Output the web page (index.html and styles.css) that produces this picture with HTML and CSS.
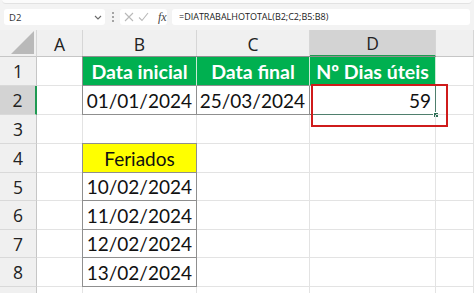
FILE: index.html
```html
<!DOCTYPE html>
<html lang="pt">
<head>
<meta charset="utf-8">
<title>Planilha</title>
<link rel="stylesheet" href="styles.css">
</head>
<body>
<div class="app">
  <div class="topbar">
    <div class="ribbon-edge"></div>
    <div class="fbar">
      <div class="namebox">
        <span class="nb-text">D2</span>
        <svg class="chev" width="8" height="5" viewBox="0 0 8 5"><path d="M1 1 L4 4 L7 1" fill="none" stroke="#6a6a6a" stroke-width="1.1"/></svg>
      </div>
      <div class="dots"><i></i><i></i><i></i></div>
      <div class="fxbox">
        <svg class="ico" width="10" height="10" viewBox="0 0 10 10"><path d="M1 1 L9 9 M9 1 L1 9" fill="none" stroke="#b9b9b9" stroke-width="1.1"/></svg>
        <svg class="ico" width="11" height="10" viewBox="0 0 11 10"><path d="M1 5.5 L4 8.5 L10 1" fill="none" stroke="#b9b9b9" stroke-width="1.1"/></svg>
        <span class="fx">fx</span>
      </div>
      <div class="formula">=DIATRABALHOTOTAL(B2;C2;B5:B8)</div>
    </div>
  </div>

  <div class="sheet">
    <!-- header row -->
    <div class="c h corner"><svg width="24" height="23" viewBox="0 0 24 23"><path d="M23 0 L23 23 L0 23 Z" fill="#b9b9b9"/></svg></div>
    <div class="c h">A</div>
    <div class="c h">B</div>
    <div class="c h">C</div>
    <div class="c h hsel">D</div>
    <div class="c h"></div>

    <!-- row 1 -->
    <div class="c rh">1</div>
    <div class="c"></div>
    <div class="c g bt bl">Data inicial</div>
    <div class="c g bt">Data final</div>
    <div class="c g bt">Nº Dias úteis</div>
    <div class="c"></div>

    <!-- row 2 -->
    <div class="c rh rsel">2</div>
    <div class="c"></div>
    <div class="c b r bl">01/01/2024</div>
    <div class="c b r">25/03/2024</div>
    <div class="c b r active">59<span class="handle"></span></div>
    <div class="c"></div>

    <!-- row 3 -->
    <div class="c rh">3</div>
    <div class="c"></div>
    <div class="c"></div>
    <div class="c"></div>
    <div class="c"></div>
    <div class="c"></div>

    <!-- row 4 -->
    <div class="c rh">4</div>
    <div class="c"></div>
    <div class="c b yl bt bl">Feriados</div>
    <div class="c"></div>
    <div class="c"></div>
    <div class="c"></div>

    <!-- row 5 -->
    <div class="c rh">5</div>
    <div class="c"></div>
    <div class="c b r bl">10/02/2024</div>
    <div class="c"></div>
    <div class="c"></div>
    <div class="c"></div>

    <!-- row 6 -->
    <div class="c rh">6</div>
    <div class="c"></div>
    <div class="c b r bl">11/02/2024</div>
    <div class="c"></div>
    <div class="c"></div>
    <div class="c"></div>

    <!-- row 7 -->
    <div class="c rh">7</div>
    <div class="c"></div>
    <div class="c b r bl">12/02/2024</div>
    <div class="c"></div>
    <div class="c"></div>
    <div class="c"></div>

    <!-- row 8 -->
    <div class="c rh">8</div>
    <div class="c"></div>
    <div class="c b r bl">13/02/2024</div>
    <div class="c"></div>
    <div class="c"></div>
    <div class="c"></div>

    <!-- row 9 (partly visible) -->
    <div class="c rh"></div>
    <div class="c"></div>
    <div class="c"></div>
    <div class="c"></div>
    <div class="c"></div>
    <div class="c"></div>

    <div class="redbox"></div>
  </div>
</div>
</body>
</html>
```

FILE: styles.css
```css
* { box-sizing: border-box; }

html, body {
  margin: 0;
  padding: 0;
  background: #ffffff;
  overflow: hidden;
}

.app {
  width: 474px;
  height: 293px;
  overflow: hidden;
}

/* ---------- formula bar ---------- */
.topbar {
  height: 30px;
  background: #f3f3f3;
  position: relative;
}

.ribbon-edge {
  height: 4px;
  margin: 0 2px;
  background: #fbfbfb;
  border-bottom: 1px solid #e2e2e2;
  border-radius: 0 0 4px 4px;
}

.fbar {
  display: flex;
  align-items: center;
  height: 16px;
  margin-top: 5px;
  padding-left: 4px;
}

.namebox {
  width: 101px;
  height: 16px;
  background: #ffffff;
  border-radius: 3px;
  display: flex;
  align-items: center;
  justify-content: space-between;
  padding: 0 3px 0 5px;
  font-family: "Open Sans", "Noto Sans", sans-serif;
  font-size: 9.5px;
  color: #333;
}

.chev { display: block; }

.dots {
  width: 15px;
  height: 16px;
  display: flex;
  flex-direction: column;
  align-items: center;
  justify-content: center;
  gap: 2px;
}

.dots i {
  display: block;
  width: 2px;
  height: 2px;
  border-radius: 50%;
  background: #8a8a8a;
}

.fxbox {
  width: 47px;
  height: 16px;
  background: #ffffff;
  border-radius: 3px;
  display: flex;
  align-items: center;
  gap: 4px;
  padding-left: 4px;
}

.ico { display: block; }

.fx {
  font-family: "Liberation Serif", serif;
  font-style: italic;
  font-size: 12px;
  color: #444;
  margin-left: 5px;
  line-height: 1;
}

.formula {
  margin-left: 5px;
  width: 298px;
  height: 16px;
  background: #ffffff;
  border-radius: 3px;
  padding-left: 7px;
  font-family: "Open Sans", "Noto Sans", sans-serif;
  font-size: 9px;
  line-height: 16px;
  color: #222;
  white-space: nowrap;
}

/* ---------- sheet ---------- */
.sheet {
  position: relative;
  display: grid;
  grid-template-columns: 37px 46px 114px 113px 126px 38px;
  grid-template-rows: 27px 29px 29px 29px 29px 28px 29px 28px 29px 29px;
}

.c {
  border-right: 1px solid #e3e3e3;
  border-bottom: 1px solid #e3e3e3;
  display: flex;
  align-items: flex-end;
  padding: 0 4px 4px;
  font-family: Lato, "Noto Sans", sans-serif;
  font-size: 19px;
  line-height: 1;
  color: #111;
  white-space: nowrap;
  position: relative;
}

/* headers */
.h {
  background: #f0f0f0;
  border-right: 1px solid #d6d6d6;
  border-bottom: 1px solid #c6c6c6;
  justify-content: center;
  align-items: center;
  padding: 3px 0 0;
  font-family: "Open Sans", "Noto Sans", sans-serif;
  font-size: 17.5px;
  color: #222;
}

.corner {
  align-items: flex-end;
  justify-content: flex-end;
  padding: 0 1px 2px 0;
}

.corner svg { display: block; }

.hsel {
  background: #d3d3d3;
  border-bottom: 2px solid #1e9a52;
}

.rh {
  background: #f0f0f0;
  border-right: 1px solid #c6c6c6;
  border-bottom: 1px solid #d9d9d9;
  justify-content: center;
  align-items: center;
  padding: 2px 0 0;
  font-family: "Open Sans", "Noto Sans", sans-serif;
  font-size: 17.5px;
  color: #222;
}

.rsel {
  background: #d3d3d3;
  border-right: 2px solid #1e9a52;
}

/* data cells */
.g {
  background: #00b050;
  color: #ffffff;
  font-weight: 700;
  font-size: 19.5px;
  justify-content: center;
  border-right: 1px solid #c9e9d4;
  border-bottom: 1px solid #8f8f8f;
}

.b {
  border-right: 1px solid #8f8f8f;
  border-bottom: 1px solid #8f8f8f;
}

.bl { box-shadow: -1px 0 0 #8f8f8f; }
.bt { box-shadow: 0 -1px 0 #8f8f8f; }
.bt.bl { box-shadow: -1px 0 0 #8f8f8f, 0 -1px 0 #8f8f8f, -1px -1px 0 #8f8f8f; }

.r { justify-content: flex-end; }

.yl {
  background: #ffff00;
  justify-content: center;
}

.active {
  border-right: 1px solid #4f7f6d;
  border-bottom: 1px solid #4f7f6d;
}

.handle {
  position: absolute;
  right: -3px;
  bottom: -3px;
  width: 4px;
  height: 4px;
  background: #2d6e55;
  border: 1px solid #ffffff;
  box-sizing: content-box;
  margin: -1px;
}

/* annotation */
.redbox {
  position: absolute;
  left: 311px;
  top: 54px;
  width: 137px;
  height: 43px;
  border: 2px solid #cf1b1b;
  pointer-events: none;
}
```
